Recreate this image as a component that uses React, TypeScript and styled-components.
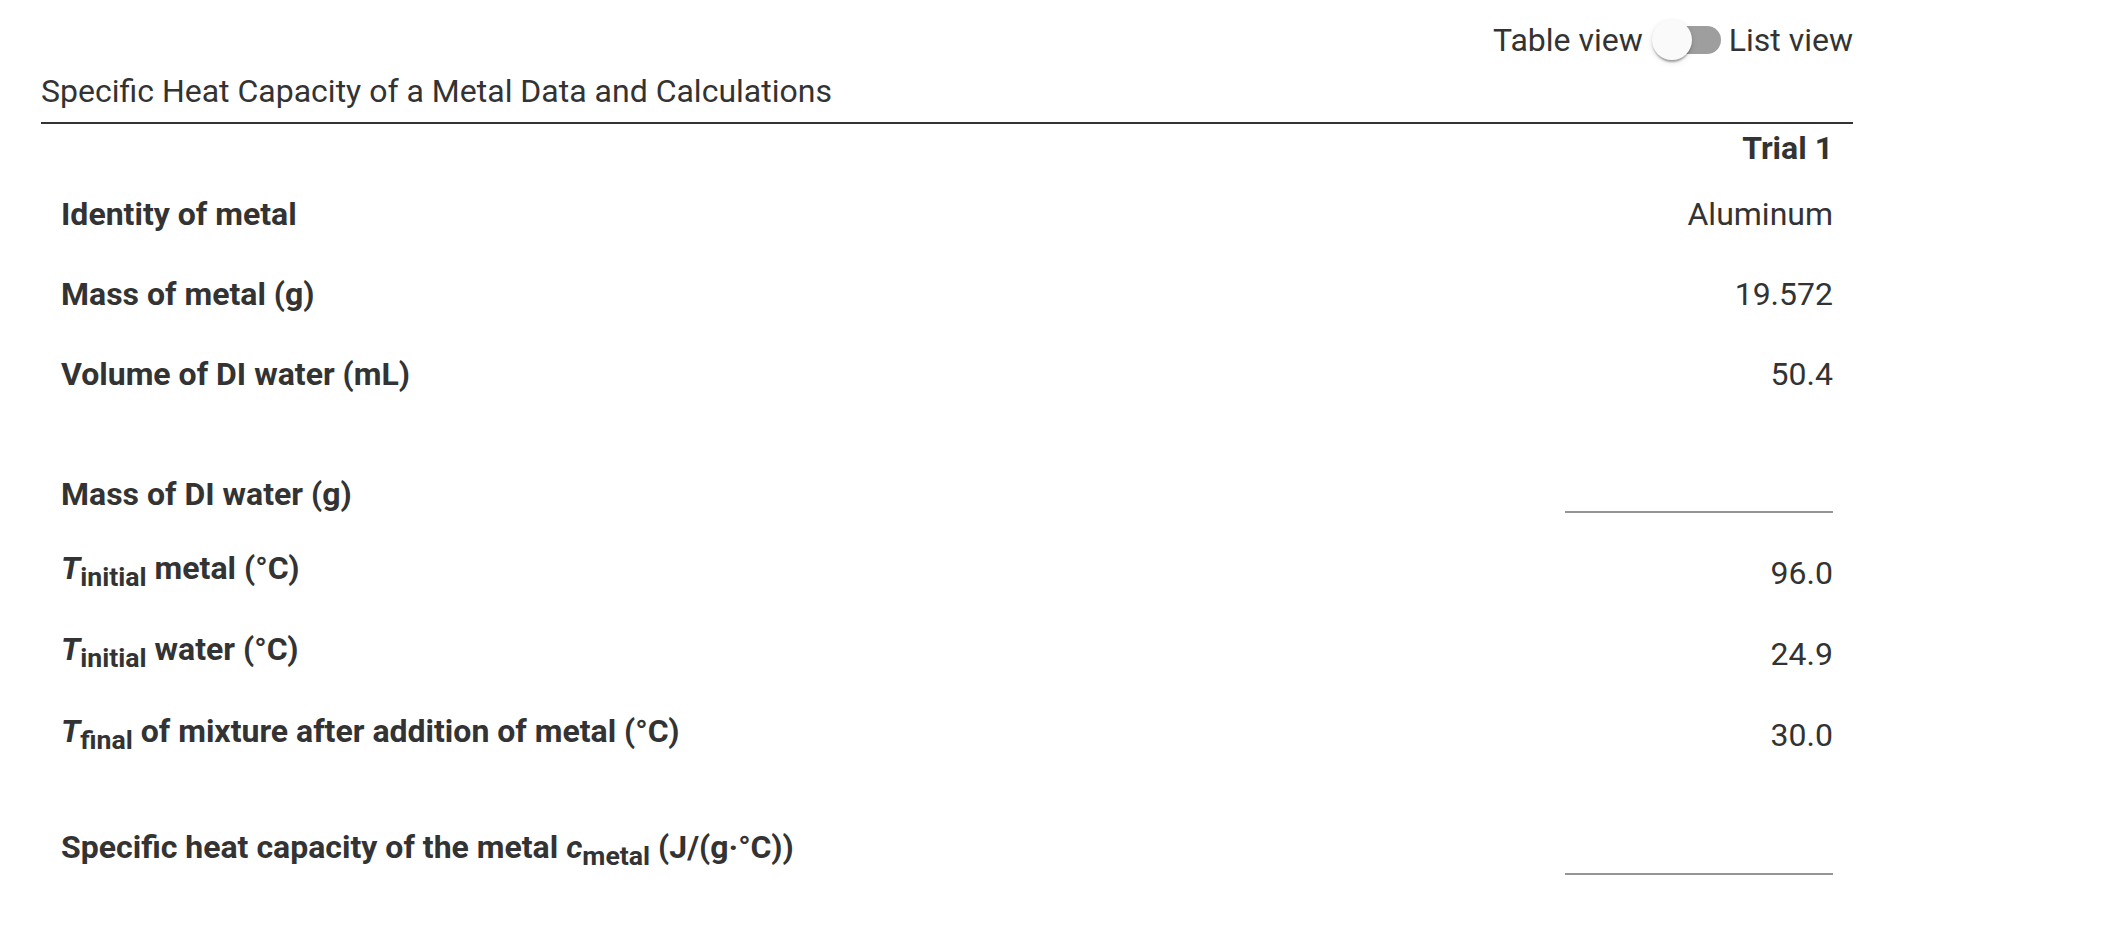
import React from "react";
import styled, { createGlobalStyle } from "styled-components";

const Global = createGlobalStyle`
  html, body { margin: 0; padding: 0; background: #ffffff; }
  body {
    font-family: Roboto, "Liberation Sans", Arial, sans-serif;
    color: #333333;
    -webkit-font-smoothing: antialiased;
  }
`;

const Page = styled.div`
  width: 1812px;
  padding-left: 41px;
  font-size: 32px;
  line-height: 48px;
`;

const ToggleBar = styled.div`
  display: flex;
  justify-content: flex-end;
  align-items: center;
  padding-top: 16px;
  height: 48px;
`;

const ToggleText = styled.span`
  font-size: 32px;
  line-height: 48px;
  color: #333333;
`;

const Switch = styled.span`
  position: relative;
  display: flex;
  align-items: center;
  width: 69px;
  height: 40px;
  margin: 0 8px 0 9px;
`;

const Track = styled.span`
  display: block;
  margin-left: 1px;
  width: 68px;
  height: 28px;
  border-radius: 14px;
  background: #9e9e9e;
`;

const Thumb = styled.span`
  position: absolute;
  left: 0;
  top: 0;
  width: 40px;
  height: 40px;
  border-radius: 50%;
  background: #fafafa;
  box-shadow: 0 4px 2px -2px rgba(0, 0, 0, 0.2), 0 2px 2px 0 rgba(0, 0, 0, 0.14),
    0 2px 6px 0 rgba(0, 0, 0, 0.12);
`;

const Title = styled.div`
  margin-top: 3px;
  padding-bottom: 7px;
  border-bottom: 2px solid #333333;
  font-size: 32px;
  line-height: 48px;
  font-weight: 400;
`;

const Table = styled.table`
  width: 100%;
  border-collapse: collapse;
  border-spacing: 0;
`;

const HeadCell = styled.th<{ $align?: string }>`
  box-sizing: border-box;
  height: 50px;
  padding: 0 20px 2px;
  text-align: ${(p) => p.$align || "left"};
  vertical-align: top;
  font-size: 32px;
  line-height: 48px;
  font-weight: 700;
  color: #333333;
`;

const Cell = styled.td<{ $input?: boolean; $value?: boolean }>`
  box-sizing: border-box;
  height: ${(p) => (p.$input ? "118px" : "80px")};
  padding: ${(p) => (p.$input ? "12px 20px 14px" : "12px 20px")};
  vertical-align: ${(p) => (p.$input ? "bottom" : "middle")};
  text-align: ${(p) => (p.$value ? "right" : "left")};
  font-size: 32px;
  line-height: 48px;
  font-weight: ${(p) => (p.$value ? 400 : 700)};
  color: #333333;
  white-space: nowrap;
`;

const Var = styled.i`
  font-style: italic;
`;

const Sub = styled.sub`
  font-size: 0.833em;
`;

const Field = styled.input`
  display: block;
  box-sizing: border-box;
  width: 268px;
  height: 48px;
  margin: 0 0 5px auto;
  padding: 0;
  border: none;
  border-bottom: 2px solid #959595;
  background: transparent;
  font-family: Roboto, "Liberation Sans", Arial, sans-serif;
  font-size: 32px;
  color: #333333;
  text-align: right;
  outline: none;
`;

type Row = { label: React.ReactNode; value?: string; input?: boolean };

const rows: Row[] = [
  { label: "Identity of metal", value: "Aluminum" },
  { label: "Mass of metal (g)", value: "19.572" },
  { label: "Volume of DI water (mL)", value: "50.4" },
  { label: "Mass of DI water (g)", input: true },
  {
    label: (
      <>
        <Var>T</Var>
        <Sub>initial</Sub> metal (°C)
      </>
    ),
    value: "96.0",
  },
  {
    label: (
      <>
        <Var>T</Var>
        <Sub>initial</Sub> water (°C)
      </>
    ),
    value: "24.9",
  },
  {
    label: (
      <>
        <Var>T</Var>
        <Sub>final</Sub> of mixture after addition of metal (°C)
      </>
    ),
    value: "30.0",
  },
  {
    label: (
      <>
        Specific heat capacity of the metal <Var>c</Var>
        <Sub>metal</Sub> (J/(g·°C))
      </>
    ),
    input: true,
  },
];

export default function App() {
  return (
    <>
      <Global />
      <Page>
        <ToggleBar>
          <ToggleText>Table view</ToggleText>
          <Switch>
            <Track />
            <Thumb />
          </Switch>
          <ToggleText>List view</ToggleText>
        </ToggleBar>
        <Title>Specific Heat Capacity of a Metal Data and Calculations</Title>
        <Table>
          <thead>
            <tr>
              <HeadCell />
              <HeadCell $align="right">Trial 1</HeadCell>
            </tr>
          </thead>
          <tbody>
            {rows.map((r, i) => (
              <tr key={i}>
                <Cell $input={r.input}>{r.label}</Cell>
                <Cell $input={r.input} $value>
                  {r.input ? <Field type="text" aria-label="answer" /> : r.value}
                </Cell>
              </tr>
            ))}
          </tbody>
        </Table>
      </Page>
    </>
  );
}
